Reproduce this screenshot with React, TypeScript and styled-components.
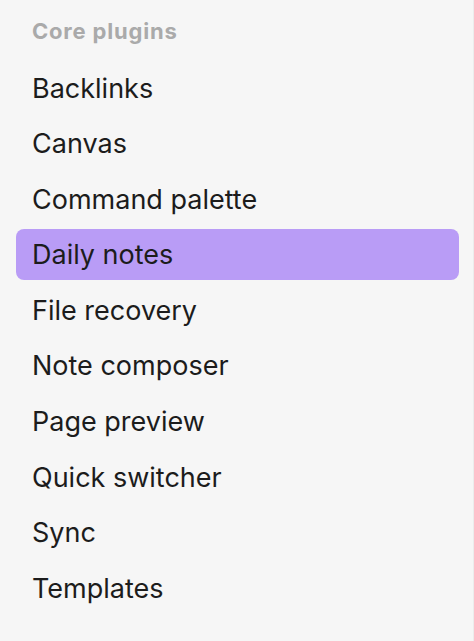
import styled, { createGlobalStyle } from 'styled-components';

const GlobalStyle = createGlobalStyle`
  html, body {
    margin: 0;
    padding: 0;
    background: #f6f6f6;
  }
  body {
    font-family: Inter, "Noto Sans", "Liberation Sans", sans-serif;
    -webkit-font-smoothing: antialiased;
  }
`;

const Panel = styled.div`
  width: 474px;
  height: 641px;
  box-sizing: border-box;
  padding: 8px 14px 0 16px;
  background: #f6f6f6;
  border-right: 1px solid #ececec;
  overflow: hidden;
`;

const SectionTitle = styled.div`
  height: 46px;
  line-height: 46px;
  padding-left: 16px;
  font-size: 22px;
  font-weight: 700;
  letter-spacing: 0.8px;
  color: #aaaaaa;
`;

const List = styled.ul`
  list-style: none;
  margin: 8.5px 0 0;
  padding: 0;
  display: flex;
  flex-direction: column;
  gap: 4.6px;
`;

const Item = styled.li<{ active?: boolean }>`
  height: 51px;
  display: flex;
  align-items: center;
  padding-left: 16px;
  border-radius: 8px;
  font-size: 27px;
  color: #1c1c1c;
  background: ${({ active }) => (active ? '#b99cf6' : 'transparent')};
`;

const plugins = [
  'Backlinks',
  'Canvas',
  'Command palette',
  'Daily notes',
  'File recovery',
  'Note composer',
  'Page preview',
  'Quick switcher',
  'Sync',
  'Templates',
];

export default function App() {
  return (
    <>
      <GlobalStyle />
      <Panel>
        <SectionTitle>Core plugins</SectionTitle>
        <List>
          {plugins.map((name) => (
            <Item key={name} active={name === 'Daily notes'}>
              {name}
            </Item>
          ))}
        </List>
      </Panel>
    </>
  );
}
